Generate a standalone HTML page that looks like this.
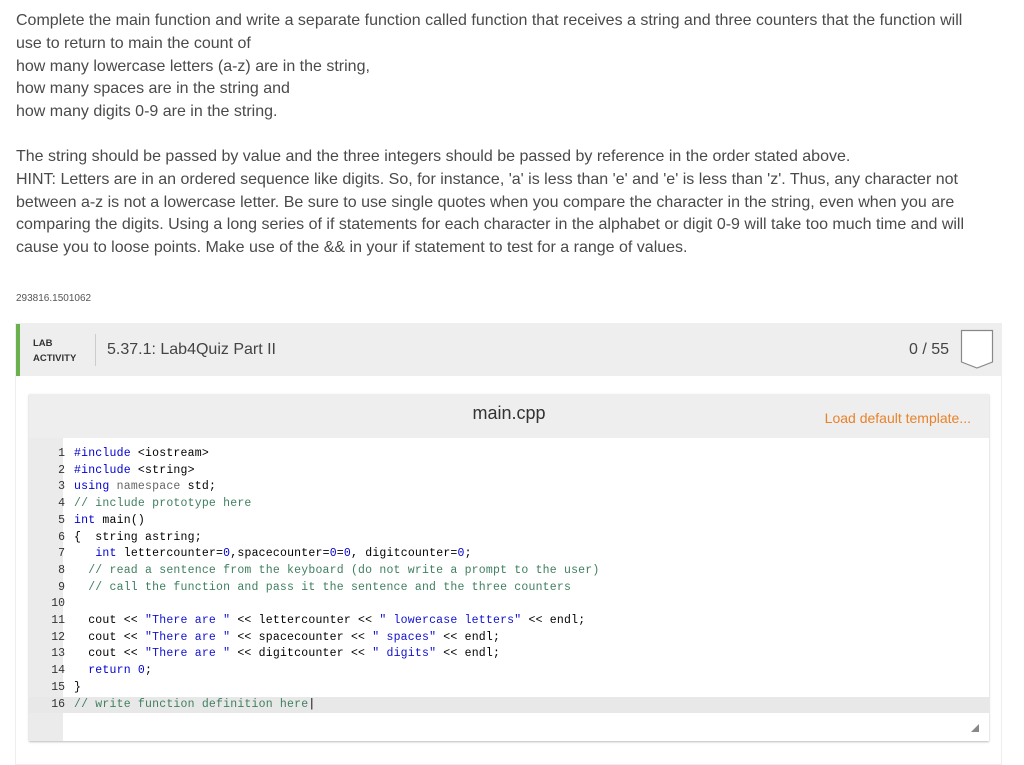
<!DOCTYPE html>
<html><head><meta charset="utf-8"><style>
body{margin:0;background:#fff;font-family:"Liberation Sans",sans-serif;color:#4a4a4a;width:1024px;height:753px;overflow:hidden;position:relative}
.p{position:absolute;left:16px;font-size:16px;line-height:22.8px;width:974px;letter-spacing:0px}
.id{position:absolute;left:16px;top:293px;font-size:10px;color:#555}
.card{position:absolute;left:15px;top:323px;width:985px;height:440px;border:1px solid #eee;background:#fff}
.hdr{position:absolute;left:0;top:0;width:985px;height:52px;background:#eee;border-left:4px solid #6ab04c;box-sizing:border-box}
.lab{position:absolute;left:13px;top:12px;font-size:9.5px;font-weight:bold;line-height:15px;color:#333}
.sep{position:absolute;left:75px;top:10px;width:1px;height:32px;background:#ccc}
.ttl{position:absolute;left:87px;top:17px;font-size:16px;color:#444}
.score{position:absolute;left:889px;top:17px;font-size:16px;color:#444}
.inner{position:absolute;left:13px;top:70px;width:960px;height:347px;box-shadow:0 1px 2px #bbb}
.ih{position:absolute;left:0;top:0;width:960px;height:44px;background:#eee}
.fn{position:absolute;left:0;width:960px;top:9px;text-align:center;font-size:18px;color:#333}
.ld{position:absolute;right:18px;top:16px;font-size:14px;color:#e8832a}
.gut{position:absolute;left:0;top:44px;width:34px;height:303px;background:#ebebeb}
.hl{position:absolute;left:0;top:303px;width:960px;height:16px;background:#e8e8e8}
pre{position:absolute;left:0;top:52px;margin:0;font-family:"Liberation Mono",monospace;font-size:11.5px;letter-spacing:0.2px;line-height:16.7px;color:#000}
.n{display:inline-block;width:36px;text-align:right;padding-right:9px;color:#333;letter-spacing:0}
.n2{padding-right:3px}
.k{color:#0000d0}.c{color:#3f7f5f}.s{color:#1010d0}.m{color:#666}
</style></head><body>
<div class="p" style="top:10px">Complete the main function and write a separate function called function that receives a string and three counters that the function will use to return to main the count of<br>how many lowercase letters (a-z) are in the string,<br>how many spaces are in the string and<br>how many digits 0-9 are in the string.</div>
<div class="p" style="top:146px">The string should be passed by value and the three integers should be passed by reference in the order stated above.<br>HINT: Letters are in an ordered sequence like digits. So, for instance, 'a' is less than 'e' and 'e' is less than 'z'. Thus, any character not between a-z is not a lowercase letter. Be sure to use single quotes when you compare the character in the string, even when you are comparing the digits. Using a long series of if statements for each character in the alphabet or digit 0-9 will take too much time and will cause you to loose points. Make use of the &amp;&amp; in your if statement to test for a range of values.</div>
<div class="id">293816.1501062</div>
<div class="card">
 <div class="hdr"><div class="lab">LAB<br>ACTIVITY</div><div class="sep"></div><div class="ttl">5.37.1: Lab4Quiz Part II</div><div class="score">0 / 55</div>
 <svg style="position:absolute;left:940px;top:5px" width="36" height="40"><path d="M1.5 1.5H32.5V33L17 39L1.5 33Z" fill="#fff" stroke="#888" stroke-width="1.2"/></svg></div>
 <div class="inner">
  <div class="ih"><div class="fn">main.cpp</div><div class="ld">Load default template...</div></div>
  <div class="gut"></div><div class="hl"></div>
<pre><span class="n">1</span><span class="k">#include</span> &lt;iostream&gt;
<span class="n">2</span><span class="k">#include</span> &lt;string&gt;
<span class="n">3</span><span class="k">using</span> <span class="m">namespace</span> std;
<span class="n">4</span><span class="c">// include prototype here</span>
<span class="n">5</span><span class="k">int</span> main()
<span class="n">6</span>{  string astring;
<span class="n">7</span>   <span class="k">int</span> lettercounter=<span class="k">0</span>,spacecounter=<span class="k">0</span>=<span class="k">0</span>, digitcounter=<span class="k">0</span>;
<span class="n">8</span>  <span class="c">// read a sentence from the keyboard (do not write a prompt to the user)</span>
<span class="n">9</span>  <span class="c">// call the function and pass it the sentence and the three counters</span>
<span class="n">10</span>
<span class="n">11</span>  cout &lt;&lt; <span class="s">"There are "</span> &lt;&lt; lettercounter &lt;&lt; <span class="s">" lowercase letters"</span> &lt;&lt; endl;
<span class="n">12</span>  cout &lt;&lt; <span class="s">"There are "</span> &lt;&lt; spacecounter &lt;&lt; <span class="s">" spaces"</span> &lt;&lt; endl;
<span class="n">13</span>  cout &lt;&lt; <span class="s">"There are "</span> &lt;&lt; digitcounter &lt;&lt; <span class="s">" digits"</span> &lt;&lt; endl;
<span class="n">14</span>  <span class="k">return</span> <span class="k">0</span>;
<span class="n">15</span>}
<span class="n">16</span><span class="c">// write function definition here</span>|</pre>
  <svg style="position:absolute;left:942px;top:330px" width="8" height="8"><path d="M8 0V8H0Z" fill="#888"/></svg>
 </div>
</div>
</body></html>
